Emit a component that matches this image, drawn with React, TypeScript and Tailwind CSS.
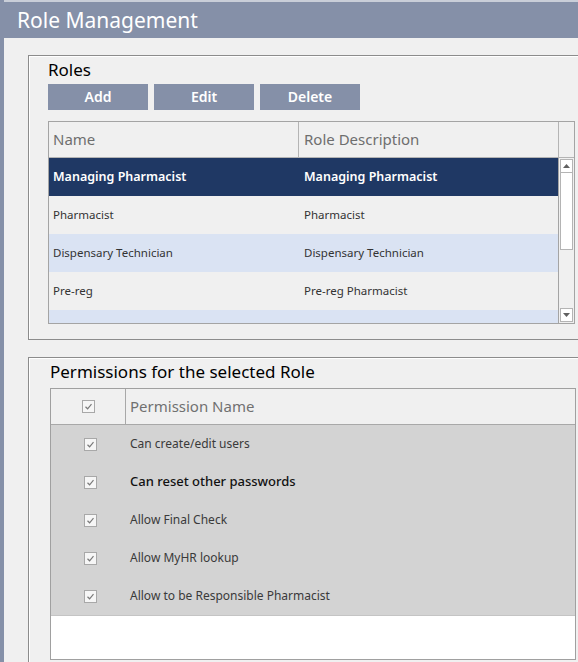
import { useState } from "react";

const roles = [
  { name: "Managing Pharmacist", description: "Managing Pharmacist" },
  { name: "Pharmacist", description: "Pharmacist" },
  { name: "Dispensary Technician", description: "Dispensary Technician" },
  { name: "Pre-reg", description: "Pre-reg Pharmacist" },
  { name: "", description: "" },
];

const permissions = [
  { label: "Can create/edit users", focused: false },
  { label: "Can reset other passwords", focused: true },
  { label: "Allow Final Check", focused: false },
  { label: "Allow MyHR lookup", focused: false },
  { label: "Allow to be Responsible Pharmacist", focused: false },
];

const CheckBox = () => (
  <div className="w-[13px] h-[13px] border border-[#a8a8a8] bg-[#f6f6f6] flex items-center justify-center">
    <svg width="9" height="9" viewBox="0 0 9 9">
      <path d="M1.5 4.8 L3.6 6.8 L7.5 2.2" fill="none" stroke="#7a7a7a" strokeWidth="1.2" />
    </svg>
  </div>
);

const Arrow = ({ up }: { up: boolean }) => (
  <div className="h-[14px] shrink-0 border border-[#b4b4b4] bg-white flex items-center justify-center">
    <svg width="7" height="4" viewBox="0 0 7 4">
      <path d={up ? "M0 4 L3.5 0 L7 4 Z" : "M0 0 L3.5 4 L7 0 Z"} fill="#606060" />
    </svg>
  </div>
);

const App = () => {
  const [selected, setSelected] = useState(0);

  return (
    <div
      className="w-[578px] h-[662px] overflow-hidden bg-[#f0f0f0] border-l-4 border-[#8590a8]"
      style={{ fontFamily: '"Noto Sans", "Open Sans", sans-serif' }}
    >
      {/* Title bar */}
      <div className="h-[2px] bg-[#c9ced8]" />
      <div className="h-[36px] bg-[#8590a8] pl-[13px] flex items-center">
        <span className="text-white text-[21px] leading-none">Role Management</span>
      </div>

      <div className="flex flex-col pl-[24px] pt-[17px]">
        {/* Roles group */}
        <div className="shrink-0 w-[570px] h-[285px] border border-[#8c8c8c] shadow-[inset_1px_1px_0_#ffffff] pl-[19px] pt-[3px]">
          <div className="text-[17px] leading-[22px] text-black">Roles</div>
          <div className="flex gap-[6px] mt-[3px]">
            {["Add", "Edit", "Delete"].map((b) => (
              <button
                key={b}
                className="w-[100px] h-[26px] bg-[#8590a8] text-white text-[14px] font-semibold leading-none"
              >
                {b}
              </button>
            ))}
          </div>

          <div className="mt-[11px] w-[527px] border border-[#a4a4a4] bg-[#f0f0f0]">
            <div className="flex h-[36px] border-b border-[#b4b4b4]">
              <div className="w-[250px] border-r border-[#b4b4b4] pl-[4px] flex items-center text-[15px] text-[#6e6e6e]">
                Name
              </div>
              <div className="w-[260px] border-r border-[#b4b4b4] pl-[5px] flex items-center text-[15px] text-[#6e6e6e]">
                Role Description
              </div>
              <div className="flex-1" />
            </div>
            <div className="flex h-[165px]">
              <div className="w-[509px] h-[165px] overflow-hidden">
                {roles.map((r, i) => {
                  const isSel = i === selected;
                  const bg = isSel ? "bg-[#1f3864]" : i % 2 === 0 ? "bg-[#dae3f3]" : "bg-[#f0f0f0]";
                  return (
                    <div
                      key={i}
                      onClick={() => setSelected(i)}
                      className={`flex h-[38px] items-center ${bg} ${
                        isSel ? "text-white font-semibold text-[12.5px]" : "text-[#333] text-[11.5px]"
                      }`}
                    >
                      <div className="w-[250px] pl-[4px]">{r.name}</div>
                      <div className="flex-1 pl-[5px]">{r.description}</div>
                    </div>
                  );
                })}
              </div>
              <div className="w-[16px] border-l border-[#a4a4a4] flex flex-col p-px bg-[#f0f0f0]">
                <Arrow up />
                <div className="h-[77px] shrink-0 border border-[#b4b4b4] border-t-0 bg-white" />
                <div className="flex-1" />
                <Arrow up={false} />
              </div>
            </div>
          </div>
        </div>

        {/* Permissions group */}
        <div className="shrink-0 mt-[17px] w-[570px] h-[320px] border border-[#8c8c8c] shadow-[inset_1px_1px_0_#ffffff] pl-[21px] pt-[3px]">
          <div className="text-[17px] leading-[22px] text-black">
            Permissions for the selected Role
          </div>
          <div className="mt-[5px] w-[526px] border border-[#a0a0a0]">
            <div className="flex h-[36px] border-b border-[#a8a8a8] bg-[#f0f0f0]">
              <div className="w-[75px] border-r border-[#a8a8a8] flex items-center justify-center pl-[1px]">
                <CheckBox />
              </div>
              <div className="pl-[4px] flex items-center text-[15px] text-[#707070]">Permission Name</div>
            </div>
            {permissions.map((p) => (
              <div key={p.label} className="flex h-[38px] items-center bg-[#d3d3d3]">
                <div className="w-[76px] flex justify-center pl-[3px]">
                  <CheckBox />
                </div>
                <div
                  className={`pl-[3px] ${
                    p.focused ? "text-[13px] font-medium text-[#111]" : "text-[12px] text-[#3a3a3a]"
                  }`}
                >
                  {p.label}
                </div>
              </div>
            ))}
            <div className="h-[44px] bg-white border-t border-[#c4c4c4]" />
          </div>
        </div>
      </div>
    </div>
  );
};

export default App;
